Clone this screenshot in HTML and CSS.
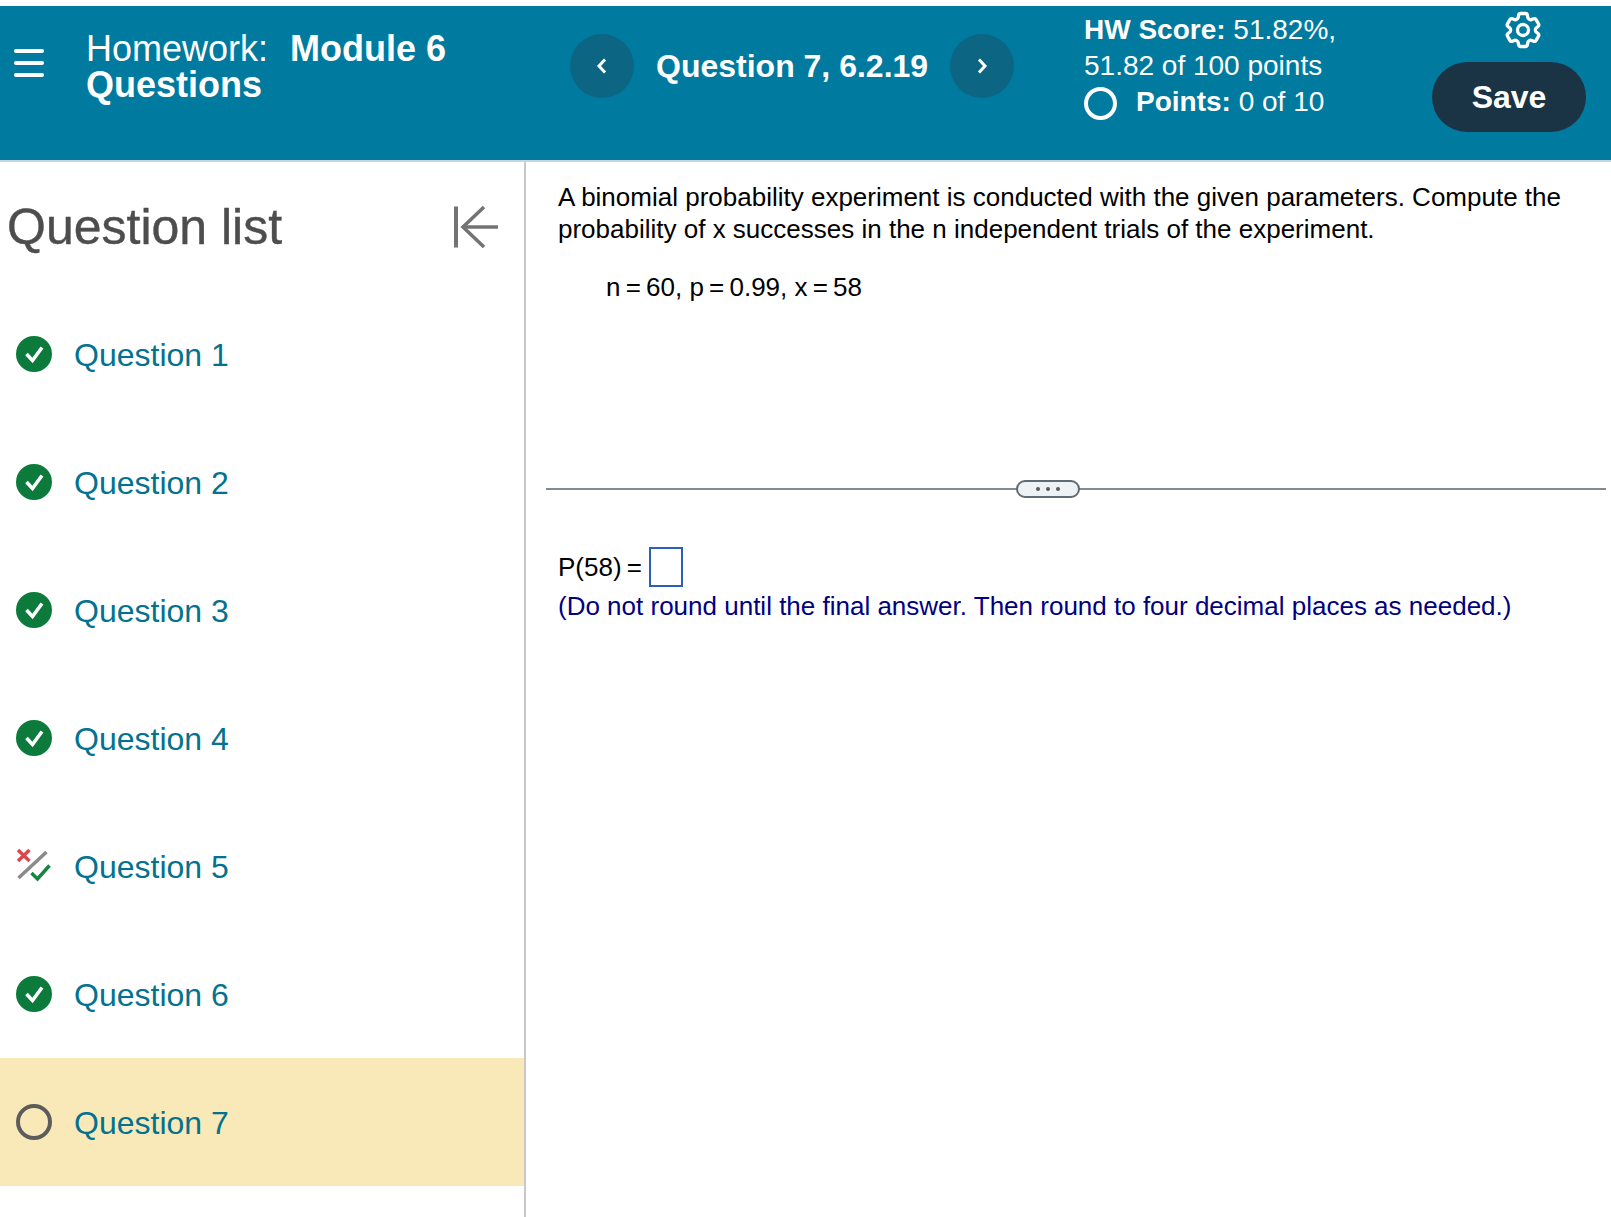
FILE: index.html
```html
<!DOCTYPE html>
<html lang="en">
<head>
    <meta charset="UTF-8">
    <title>Homework: Module 6 Questions</title>
    <link rel="stylesheet" href="styles.css">
</head>
<body>

    <div class="header">
        <div class="menu-btn">
            <span></span>
            <span></span>
            <span></span>
        </div>
        <div class="hw-title">
            <div>Homework:&nbsp; <strong class="module">Module 6</strong></div>
            <div><strong>Questions</strong></div>
        </div>
        <div class="q-nav">
            <div class="nav-btn">
                <svg viewBox="0 0 12 16" width="12" height="16"><path d="M9 1.500 3 8l6 6.500" fill="none" stroke="#fff" stroke-width="3"/></svg>
            </div>
            <div class="q-name">Question 7, 6.2.19</div>
            <div class="nav-btn">
                <svg viewBox="0 0 12 16" width="12" height="16"><path d="M3 1.500 9 8l-6 6.500" fill="none" stroke="#fff" stroke-width="3"/></svg>
            </div>
        </div>
        <div class="score">
            <div><strong>HW Score:</strong> 51.82%,</div>
            <div>51.82 of 100 points</div>
            <div class="points"><span class="points-ring"></span><span><strong>Points:</strong> 0 of 10</span></div>
        </div>
        <div class="actions">
            <svg class="gear" viewBox="0 0 24 24" width="44" height="44" fill="none" stroke="#fff" stroke-width="1.800" stroke-linejoin="round">
                <path d="M9.594 3.94c.09-.542.56-.94 1.11-.94h2.593c.55 0 1.02.398 1.11.94l.213 1.281c.063.374.313.686.645.87.074.04.147.083.22.127.325.196.72.257 1.075.124l1.217-.456a1.125 1.125 0 0 1 1.37.49l1.296 2.247a1.125 1.125 0 0 1-.26 1.431l-1.003.827c-.293.241-.438.613-.43.992a7.723 7.723 0 0 1 0 .255c-.008.378.137.75.43.991l1.004.827c.424.35.534.955.26 1.43l-1.298 2.247a1.125 1.125 0 0 1-1.369.491l-1.217-.456c-.355-.133-.75-.072-1.076.124a6.47 6.47 0 0 1-.22.128c-.331.183-.581.495-.644.869l-.213 1.281c-.09.543-.56.94-1.11.94h-2.594c-.55 0-1.019-.398-1.11-.94l-.213-1.281c-.062-.374-.312-.686-.644-.87a6.52 6.52 0 0 1-.22-.127c-.325-.196-.72-.257-1.076-.124l-1.217.456a1.125 1.125 0 0 1-1.369-.49l-1.297-2.247a1.125 1.125 0 0 1 .26-1.431l1.004-.827c.292-.24.437-.613.43-.991a6.932 6.932 0 0 1 0-.255c.007-.38-.138-.751-.43-.992l-1.004-.827a1.125 1.125 0 0 1-.26-1.43l1.297-2.247a1.125 1.125 0 0 1 1.37-.491l1.216.456c.356.133.751.072 1.076-.124.072-.044.146-.086.22-.128.332-.183.582-.495.644-.869l.214-1.28Z"/>
                <circle cx="12" cy="12" r="3"/>
            </svg>
            <div class="save-btn">Save</div>
        </div>
    </div>

    <div class="page">
        <div class="sidebar">
            <div class="sidebar-head">
                <h2>Question list</h2>
                <svg viewBox="0 0 46 44" width="46" height="44" fill="none" stroke="#737373" stroke-width="3.500">
                    <path d="M4 1.500v41" stroke-width="4"/>
                    <path d="M46 22H12"/>
                    <path d="M32 2 11 22l21 20"/>
                </svg>
            </div>

            <div class="q-row">
                <svg class="q-icon" viewBox="0 0 36 36" width="36" height="36"><circle cx="18" cy="18" r="18" fill="#0b7a3b"/><path d="M10.500 18 16.500 24.500 26 11.500" fill="none" stroke="#fff" stroke-width="3.500"/></svg>
                <span>Question 1</span>
            </div>
            <div class="q-row">
                <svg class="q-icon" viewBox="0 0 36 36" width="36" height="36"><circle cx="18" cy="18" r="18" fill="#0b7a3b"/><path d="M10.500 18 16.500 24.500 26 11.500" fill="none" stroke="#fff" stroke-width="3.500"/></svg>
                <span>Question 2</span>
            </div>
            <div class="q-row">
                <svg class="q-icon" viewBox="0 0 36 36" width="36" height="36"><circle cx="18" cy="18" r="18" fill="#0b7a3b"/><path d="M10.500 18 16.500 24.500 26 11.500" fill="none" stroke="#fff" stroke-width="3.500"/></svg>
                <span>Question 3</span>
            </div>
            <div class="q-row">
                <svg class="q-icon" viewBox="0 0 36 36" width="36" height="36"><circle cx="18" cy="18" r="18" fill="#0b7a3b"/><path d="M10.500 18 16.500 24.500 26 11.500" fill="none" stroke="#fff" stroke-width="3.500"/></svg>
                <span>Question 4</span>
            </div>
            <div class="q-row">
                <svg class="q-icon" viewBox="0 0 36 36" width="36" height="36" fill="none">
                    <path d="M2 2 13.500 13M13.500 2 2 13" stroke="#d8494f" stroke-width="3.500"/>
                    <path d="M2.500 30 30.500 4" stroke="#8a8a8a" stroke-width="3.500"/>
                    <path d="M15.500 25 21.500 31 33.500 17.500" stroke="#14863f" stroke-width="3.500"/>
                </svg>
                <span>Question 5</span>
            </div>
            <div class="q-row">
                <svg class="q-icon" viewBox="0 0 36 36" width="36" height="36"><circle cx="18" cy="18" r="18" fill="#0b7a3b"/><path d="M10.500 18 16.500 24.500 26 11.500" fill="none" stroke="#fff" stroke-width="3.500"/></svg>
                <span>Question 6</span>
            </div>
            <div class="q-row current">
                <svg class="q-icon" viewBox="0 0 36 36" width="36" height="36"><circle cx="18" cy="18" r="16" fill="none" stroke="#5c5c5c" stroke-width="4"/></svg>
                <span>Question 7</span>
            </div>
        </div>

        <div class="content">
            <div class="question-text">
                <p>A binomial probability experiment is conducted with the given parameters. Compute the probability of x successes in the n independent trials of the experiment.</p>
                <p class="params">n&thinsp;=&thinsp;60, p&thinsp;=&thinsp;0.99, x&thinsp;=&thinsp;58</p>
            </div>

            <div class="divider">
                <div class="divider-pill"><i></i><i></i><i></i></div>
            </div>

            <div class="answer">
                <div class="answer-line">P(58)&thinsp;= <span class="answer-box"></span></div>
                <div class="hint">(Do not round until the final answer. Then round to four decimal places as needed.)</div>
            </div>
        </div>
    </div>

</body>
</html>
```

FILE: styles.css
```css
* {
    box-sizing: border-box;
}

html,
body {
    height: 100%;
}

body {
    margin: 0;
    padding-top: 6px;
    font-family: "Liberation Sans", Arial, sans-serif;
    background: #fff;
    color: #000;
    overflow: hidden;
}

/* top bar */
.header {
    display: flex;
    align-items: flex-start;
    height: 156px;
    background: #007a9e;
    border-bottom: 2px solid #c5d6de;
    color: #fff;
}

.menu-btn {
    display: flex;
    flex-direction: column;
    justify-content: space-between;
    width: 30px;
    height: 28px;
    margin: 43px 0 0 14px;
}

.menu-btn span {
    display: block;
    height: 4px;
    background: #fff;
    border-radius: 2px;
}

.hw-title {
    width: 440px;
    margin: 25px 0 0 42px;
    font-size: 36px;
    line-height: 36px;
}

.hw-title .module {
    margin-left: 2px;
}

.q-nav {
    display: flex;
    align-items: center;
    margin: 28px 0 0 44px;
}

.nav-btn {
    display: flex;
    align-items: center;
    justify-content: center;
    width: 64px;
    height: 64px;
    border-radius: 50%;
    background: #0d6584;
}

.q-name {
    width: 316px;
    padding-left: 22px;
    font-size: 32px;
    font-weight: bold;
}

.score {
    width: 348px;
    margin: 6px 0 0 70px;
    font-size: 28px;
    line-height: 36px;
}

.points {
    display: flex;
    align-items: center;
    gap: 19px;
}

.points-ring {
    width: 33px;
    height: 33px;
    border: 4px solid #fff;
    border-radius: 50%;
    margin-top: 3px;
}

.actions {
    display: flex;
    flex-direction: column;
    align-items: center;
    width: 154px;
}

.gear {
    margin: 2px 0 0 28px;
}

.save-btn {
    width: 154px;
    height: 70px;
    margin-top: 10px;
    border-radius: 35px;
    background: #1a3446;
    font-size: 32px;
    font-weight: bold;
    line-height: 70px;
    text-align: center;
}

/* two columns under the bar */
.page {
    display: grid;
    grid-template-columns: 526px 1fr;
    height: 1055px;
}

.sidebar {
    border-right: 2px solid #c8c8c8;
}

.sidebar-head {
    display: flex;
    align-items: center;
    justify-content: space-between;
    height: 128px;
    padding: 2px 26px 0 7px;
}

.sidebar-head h2 {
    margin: 0;
    font-size: 50px;
    font-weight: normal;
    color: #4d4d4d;
    -webkit-text-stroke: 0.4px #4d4d4d;
}

.q-row {
    display: flex;
    align-items: center;
    gap: 22px;
    height: 128px;
    padding-left: 16px;
    font-size: 32px;
    color: #04728f;
}

.q-row span {
    padding-top: 2px;
}

.q-row.current {
    background: #f9e9b8;
}

.q-icon {
    flex: none;
}

/* question pane */
.content {
    padding-top: 19px;
}

.question-text {
    height: 307px;
    padding: 0 32px;
    font-size: 26px;
    line-height: 32px;
}

.question-text p {
    margin: 0;
}

.question-text .params {
    margin: 26px 0 0 48px;
}

.divider {
    display: flex;
    align-items: center;
    justify-content: center;
    height: 2px;
    margin: 0 5px 0 20px;
    background: #808a90;
}

.divider-pill {
    display: flex;
    align-items: center;
    justify-content: center;
    gap: 6px;
    width: 64px;
    height: 18px;
    margin-right: 56px;
    border: 2px solid #5f6c75;
    border-radius: 9px;
    background: #eef2f5;
}

.divider-pill i {
    width: 4px;
    height: 4px;
    border-radius: 50%;
    background: #4d5a63;
}

.answer {
    padding: 57px 32px 0;
    font-size: 26px;
    line-height: 32px;
}

.answer-line {
    display: flex;
    align-items: center;
    gap: 7px;
    height: 40px;
}

.answer-box {
    width: 34px;
    height: 40px;
    border: 2px solid #2a5fc0;
    background: #fff;
}

.hint {
    margin-top: 3px;
    color: #000080;
}
```
